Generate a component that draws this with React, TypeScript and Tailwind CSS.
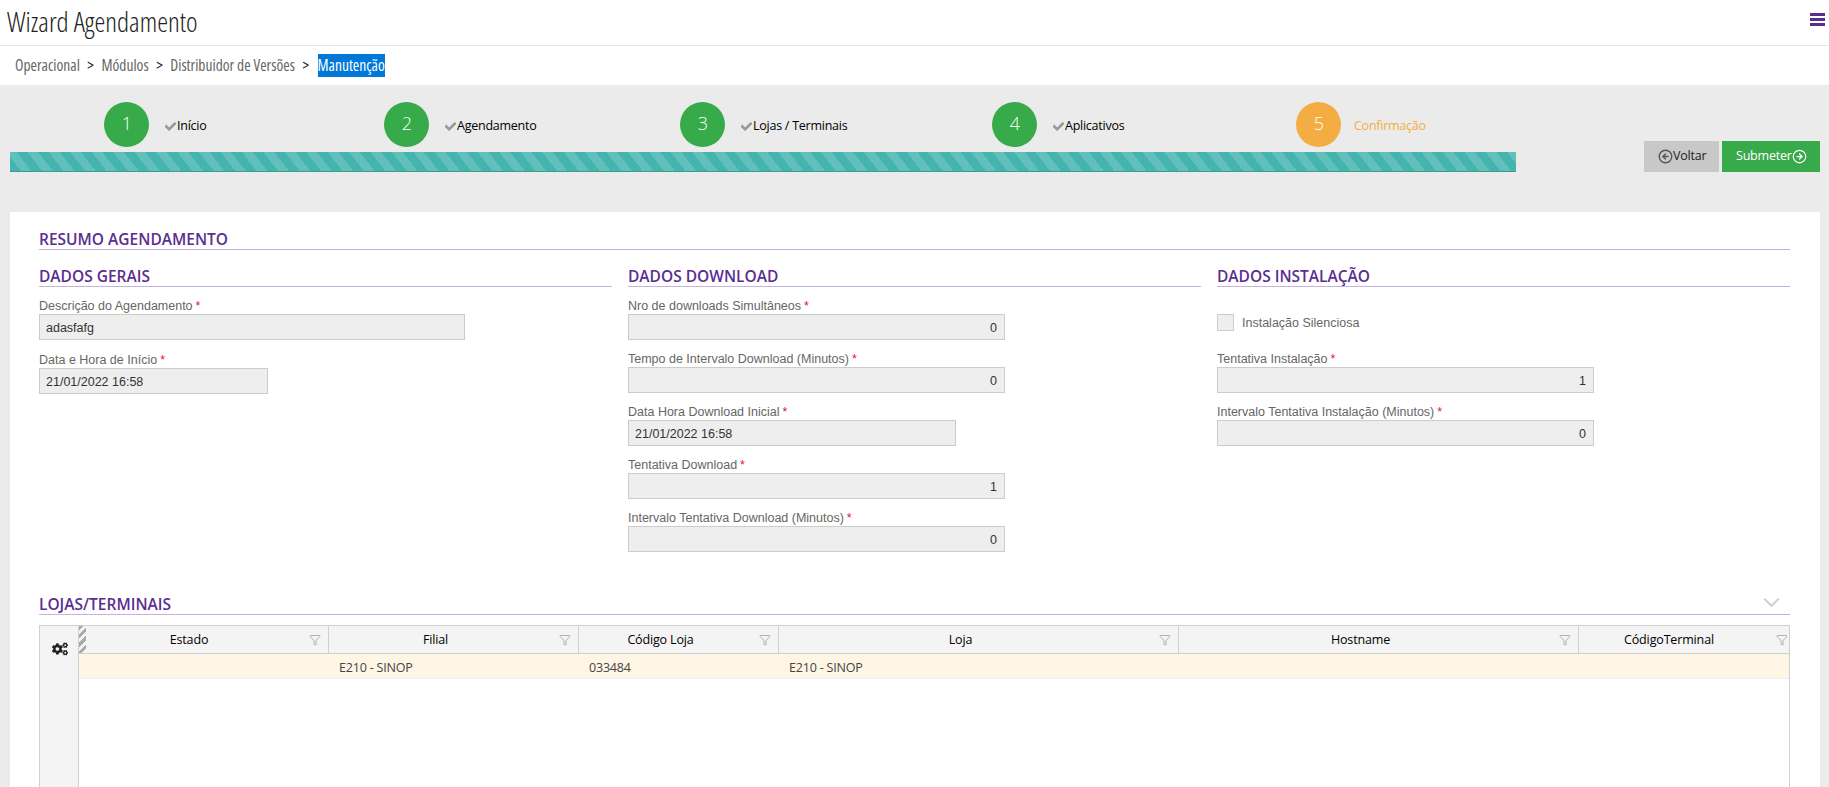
import { CircleArrowLeft, CircleArrowRight, ChevronDown, Funnel } from "lucide-react";
import { FaCheck, FaCogs } from "react-icons/fa";

const steps = [
  { n: 1, label: "Início", width: "w-[280px]" },
  { n: 2, label: "Agendamento", width: "w-[296px]" },
  { n: 3, label: "Lojas / Terminais", width: "w-[312px]" },
  { n: 4, label: "Aplicativos", width: "w-[304px]" },
];

const columns = [
  { title: "Estado", width: "w-[250px]", striped: true },
  { title: "Filial", width: "w-[250px]" },
  { title: "Código Loja", width: "w-[200px]" },
  { title: "Loja", width: "w-[400px]" },
  { title: "Hostname", width: "w-[400px]" },
  { title: "CódigoTerminal", width: "w-[217px]" },
];

const rowCells = ["", "E210 - SINOP", "033484", "E210 - SINOP", "", ""];

function Heading({ children, className = "" }: { children: React.ReactNode; className?: string }) {
  return (
    <div className={`h-[24px] border-b border-[#c3b3dd] text-[15.5px] leading-[26px] font-semibold text-[#5a2d91] ${className}`}>
      {children}
    </div>
  );
}

function Field({
  label,
  value,
  width = "w-[377px]",
  right = false,
  className = "",
}: {
  label: string;
  value: string;
  width?: string;
  right?: boolean;
  className?: string;
}) {
  return (
    <div className={className}>
      <div className="h-[27px] flex items-end pb-[1px] font-['Liberation_Sans',sans-serif] text-[12.5px] leading-[14px] text-[#666]">
        {label}
        <span className="ml-[3px] text-[#e8112d]">*</span>
      </div>
      <div
        className={`h-[26px] ${width} border border-[#ccc] bg-[#eee] pl-[6px] pr-[7px] font-['Liberation_Sans',sans-serif] text-[12.5px] leading-[27px] text-[#333] ${right ? "text-right" : ""}`}
      >
        {value}
      </div>
    </div>
  );
}

export default function App() {
  return (
    <div className="h-screen overflow-hidden flex flex-col bg-white font-['Open_Sans',sans-serif]">
      <div className="h-[46px] shrink-0 border-b border-[#e7e7e7] flex items-center justify-between pl-[7px] pr-[4px]">
        <span className="text-[27.5px] font-light text-[#222] [font-stretch:75%] pb-[2px]">Wizard Agendamento</span>
        <svg width="15" height="13" viewBox="0 0 15 13" className="fill-[#5a2d91] mb-[6px]">
          <rect width="15" height="3" />
          <rect y="5" width="15" height="3" />
          <rect y="10" width="15" height="3" />
        </svg>
      </div>

      <div className="h-[39px] shrink-0 flex items-center pl-[15px] text-[15.5px] text-[#666] [font-stretch:75%]">
        <span>Operacional</span>
        <span className="mx-[7.5px] text-[#222]">&gt;</span>
        <span>Módulos</span>
        <span className="mx-[7.5px] text-[#222]">&gt;</span>
        <span>Distribuidor de Versões</span>
        <span className="ml-[7.5px] mr-[8.5px] text-[#222]">&gt;</span>
        <span className="bg-[#0078d7] text-white">Manutenção</span>
      </div>

      <div className="flex-1 min-h-0 flex flex-col bg-[#ebebeb] pl-[10px] pr-[9px]">
        <div className="h-[127px] shrink-0 flex justify-between items-start">
          <div className="w-[1506px] pt-[17px]">
            <div className="h-[50px] flex pl-[94px]">
              {steps.map((s) => (
                <div key={s.n} className={`${s.width} shrink-0 flex items-start`}>
                  <div className="w-[45px] h-[45px] rounded-full bg-[#37aa4a] flex items-center justify-center pb-[2px] pl-[1px] text-[18px] font-light text-white">
                    {s.n}
                  </div>
                  <div className="ml-[16px] mt-[15px] flex items-center text-[12.5px] leading-[18px] tracking-[-0.25px] text-black">
                    <FaCheck className="w-[11px] h-[11px] mr-[1px] text-[#999] stroke-[#999] stroke-[30]" />
                    {s.label}
                  </div>
                </div>
              ))}
              <div className="flex items-start">
                <div className="w-[45px] h-[45px] rounded-full bg-[#f4ad42] flex items-center justify-center pb-[2px] pl-[1px] text-[18px] font-light text-white">
                  5
                </div>
                <div className="ml-[13px] mt-[15px] text-[12.5px] leading-[18px] tracking-[-0.25px] text-[#f4ad42]">Confirmação</div>
              </div>
            </div>
            <div className="h-[20px] border-b border-[#3a9c97] bg-[repeating-linear-gradient(52deg,#45b3ae_0,#45b3ae_8.45px,#62c0bb_8.45px,#62c0bb_16.9px)]" />
          </div>
          <div className="flex gap-[3px] mt-[56px]">
            <div className="w-[75px] h-[31px] bg-[#c8c8c8] flex items-center pl-[14px] text-[12.5px] tracking-[-0.2px] text-[#222]">
              <CircleArrowLeft className="w-[15px] h-[15px] text-[#555]" strokeWidth={2.25} />
              Voltar
            </div>
            <div className="w-[98px] h-[31px] bg-[#37aa4a] flex items-center pl-[14px] text-[12.5px] tracking-[-0.2px] text-white">
              Submeter
              <CircleArrowRight className="w-[15px] h-[15px]" />
            </div>
          </div>
        </div>

        <div className="flex-1 min-h-0 flex flex-col bg-white pt-[14px] pl-[29px] pr-[30px]">
          <Heading>RESUMO AGENDAMENTO</Heading>

          <div className="grid grid-cols-3 gap-x-[16px] mt-[13px]">
            <div>
              <Heading>DADOS GERAIS</Heading>
              <Field label="Descrição do Agendamento" value="adasfafg" width="w-[426px]" />
              <Field label="Data e Hora de Início" value="21/01/2022 16:58" width="w-[229px]" className="mt-[1px]" />
            </div>
            <div>
              <Heading>DADOS DOWNLOAD</Heading>
              <Field label="Nro de downloads Simultâneos" value="0" right />
              <Field label="Tempo de Intervalo Download (Minutos)" value="0" right />
              <Field label="Data Hora Download Inicial" value="21/01/2022 16:58" width="w-[328px]" />
              <Field label="Tentativa Download" value="1" right />
              <Field label="Intervalo Tentativa Download (Minutos)" value="0" right />
            </div>
            <div>
              <Heading>DADOS INSTALAÇÃO</Heading>
              <div className="h-[53px] pt-[27px] flex items-start">
                <div className="w-[17px] h-[17px] border border-[#ccc] bg-[#eee]" />
                <span className="ml-[8px] font-['Liberation_Sans',sans-serif] text-[12.5px] leading-[19px] text-[#666]">
                  Instalação Silenciosa
                </span>
              </div>
              <Field label="Tentativa Instalação" value="1" right />
              <Field label="Intervalo Tentativa Instalação (Minutos)" value="0" right />
            </div>
          </div>

          <div className="relative mt-[39px]">
            <Heading>LOJAS/TERMINAIS</Heading>
            <ChevronDown className="absolute right-[5px] top-[-2px] w-[27px] h-[27px] text-[#ccc]" strokeWidth={1.75} />
          </div>

          <div className="flex-1 min-h-0 mt-[10px] flex border border-b-0 border-[#d0d0d0] overflow-hidden">
            <div className="w-[39px] shrink-0 bg-[#f4f4f4] border-r border-[#d0d0d0] flex justify-center pt-[15px] pl-[1px]">
              <FaCogs className="w-[16px] h-[16px] text-[#222]" />
            </div>
            <div className="flex-1 min-w-0 overflow-hidden">
              <div className="flex h-[28px] bg-[#f4f4f4] border-b border-[#d0d0d0] text-[12.5px] tracking-[-0.15px] text-black">
                {columns.map((c) => (
                  <div key={c.title} className={`${c.width} shrink-0 relative flex border-r border-[#d0d0d0]`}>
                    {c.striped && (
                      <div className="w-[7px] shrink-0 bg-[repeating-linear-gradient(135deg,#aaa_0,#aaa_3px,#f4f4f4_3px,#f4f4f4_6px)]" />
                    )}
                    <div className="flex-1 text-center pr-[36px] leading-[28px]">{c.title}</div>
                    <Funnel className="absolute right-[7px] top-[8px] w-[12px] h-[12px] text-[#888]" strokeWidth={1.25} />
                  </div>
                ))}
              </div>
              <div className="flex h-[25px] bg-[#fef5e5] border-b border-[#eee] text-[12.5px] tracking-[-0.2px] text-[#444]">
                {columns.map((c, i) => (
                  <div key={c.title} className={`${c.width} shrink-0 pl-[10px] leading-[27px]`}>
                    {rowCells[i]}
                  </div>
                ))}
              </div>
            </div>
          </div>
        </div>
      </div>
    </div>
  );
}
